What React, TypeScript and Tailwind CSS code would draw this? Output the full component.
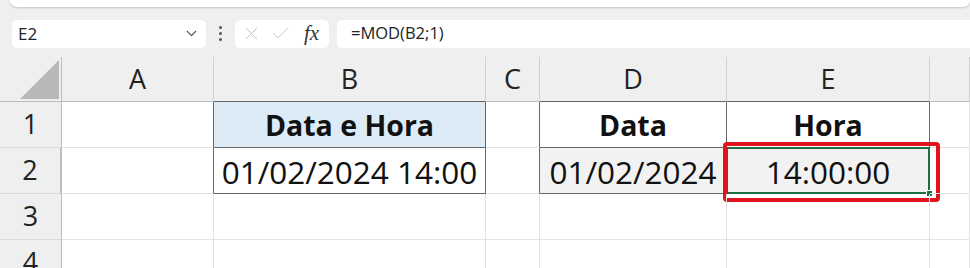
import { ChevronDown, X, Check } from 'lucide-react';

const font = "font-['Open_Sans',_'Liberation_Sans',_sans-serif]";

function Hdr({ label, className = '' }: { label?: string; className?: string }) {
  return (
    <div className={`flex items-center justify-center border-r border-b border-[#d0d0d0] bg-[#efefef] text-[27px] text-[#222] ${className}`}>
      {label}
    </div>
  );
}

function Cell({ children, bold, className = '' }: { children?: React.ReactNode; bold?: boolean; className?: string }) {
  const size = bold ? 'font-bold text-[28.5px]' : 'text-[31.5px]';
  return (
    <div className={`relative flex items-center justify-center border-r border-b border-[#e2e2e2] pt-[2px] text-[#111] ${size} ${className}`}>
      {children}
    </div>
  );
}

function RowHdr({ n, className = '' }: { n: number; className?: string }) {
  return (
    <div className={`flex items-center justify-center border-r border-b border-r-[#bdbdbd] border-b-[#dadada] bg-[#efefef] text-[27px] text-[#222] ${className}`}>
      {n}
    </div>
  );
}

export default function App() {
  return (
    <div className={`w-[970px] h-[268px] overflow-hidden bg-[#efefef] ${font}`}>
      {/* ribbon edge */}
      <div className="ml-[10px] h-[7px] rounded-b-lg bg-white shadow-[0_1px_2px_rgba(0,0,0,0.18)]" />

      {/* formula bar */}
      <div className="flex items-center h-[50px] pl-[12px] pt-[3px]">
        <div className="flex items-center justify-between w-[194px] h-[28px] rounded-[5px] bg-white pl-[6px] pr-[6px] text-[17px] text-[#222]">
          <span>E2</span>
          <ChevronDown size={17} strokeWidth={1.5} className="text-[#444]" />
        </div>
        <div className="flex flex-col items-center justify-center gap-[3px] w-[29px]">
          <span className="w-[3px] h-[3px] rounded-full bg-[#555]" />
          <span className="w-[3px] h-[3px] rounded-full bg-[#555]" />
          <span className="w-[3px] h-[3px] rounded-full bg-[#555]" />
        </div>
        <div className="flex items-center w-[94px] h-[28px] rounded-[5px] bg-white pl-[6px]">
          <X size={21} strokeWidth={1.1} className="text-[#c4c4c4]" />
          <Check size={21} strokeWidth={1.1} className="ml-[8px] text-[#c4c4c4]" />
          <span className="ml-[13px] font-['Liberation_Serif',_serif] italic text-[21px] leading-none text-[#333]">fx</span>
        </div>
        <div className="flex items-center flex-1 h-[28px] ml-[8px] rounded-l-[5px] bg-white pl-[14px] text-[16.5px] text-[#222]">
          =MOD(B2;1)
        </div>
      </div>

      {/* sheet */}
      <div className="grid grid-cols-[62px_152px_272px_54px_187px_203px_40px] grid-rows-[45px_46px_46px_46px_46px] bg-white">
        {/* header row */}
        <div className="relative border-r border-b border-r-[#bdbdbd] border-b-[#bdbdbd] bg-[#efefef]">
          <svg className="absolute right-[2px] bottom-[2px]" width="39" height="39" viewBox="0 0 39 39">
            <polygon points="39,0 39,39 0,39" fill="#b8b8b8" />
          </svg>
        </div>
        <Hdr label="A" className="border-b-[#bdbdbd]" />
        <Hdr label="B" className="border-b-[#666]" />
        <Hdr label="C" className="border-b-[#bdbdbd]" />
        <Hdr label="D" className="border-b-[#666]" />
        <Hdr label="E" className="bg-[#d2d2d2] text-[#1d6b40] border-b-[#666]" />
        <Hdr className="border-b-[#bdbdbd]" />

        {/* row 1 */}
        <RowHdr n={1} />
        <Cell className="border-r-[#666]" />
        <Cell bold className="bg-[#ddebf7] border-r-[#666] border-b-[#666]">Data e Hora</Cell>
        <Cell className="border-r-[#666]" />
        <Cell bold className="border-r-[#666] border-b-[#666]">Data</Cell>
        <Cell bold className="border-r-[#666] border-b-[#666]">Hora</Cell>
        <Cell />

        {/* row 2 */}
        <RowHdr n={2} className="bg-[#d2d2d2] text-[#1d6b40] border-r-2 border-r-[#1d6b40]" />
        <Cell className="border-r-[#666]" />
        <Cell className="border-r-[#666] border-b-[#666]">01/02/2024 14:00</Cell>
        <Cell className="border-r-[#666]" />
        <Cell className="bg-[#f2f2f2] border-r-[#666] border-b-[#666]">01/02/2024</Cell>
        <Cell className="bg-[#f2f2f2] border-r-[#666] border-b-[#666]">
          14:00:00
          <div className="absolute -left-[1px] -top-[1px] -right-[1px] -bottom-[1px] border-2 border-[#1f6e43]" />
          <div className="absolute -right-[4px] -bottom-[4px] w-[7px] h-[7px] bg-[#1f6e43] border border-white" />
          <div className="absolute -left-[4px] -top-[6px] -right-[11px] -bottom-[9px] border-4 border-[#e0141c] rounded-[4px]" />
        </Cell>
        <Cell />

        {/* rows 3-4 */}
        {[3, 4].map((n) => (
          <div key={n} className="contents">
            <RowHdr n={n} />
            <Cell />
            <Cell />
            <Cell />
            <Cell />
            <Cell />
            <Cell />
          </div>
        ))}
      </div>
    </div>
  );
}
